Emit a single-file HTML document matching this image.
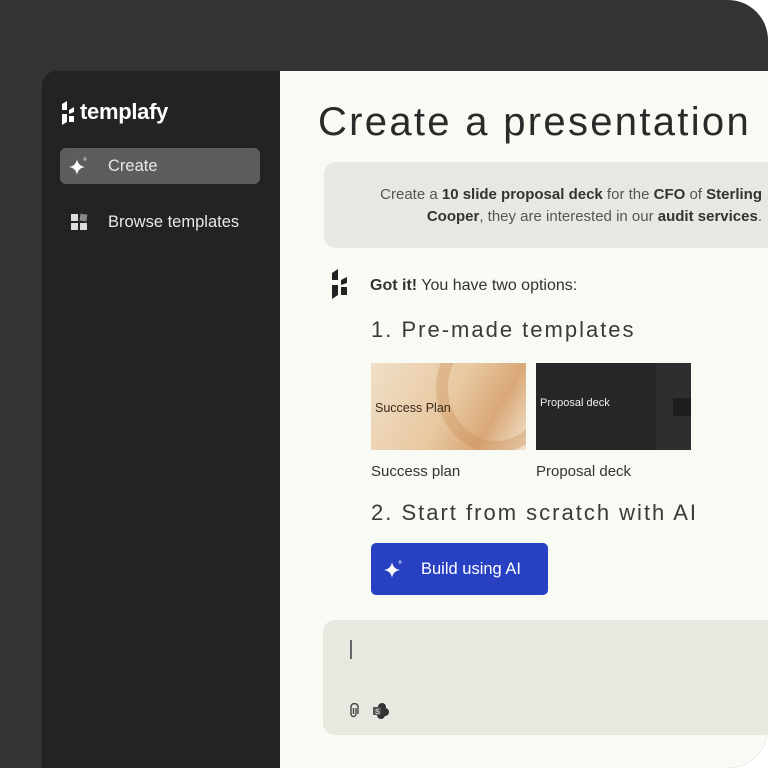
<!DOCTYPE html>
<html><head><style>
*{margin:0;padding:0;box-sizing:border-box}
html,body{width:768px;height:768px;background:#fff;overflow:hidden;font-family:"Liberation Sans",sans-serif}
.frame{position:absolute;left:0;top:0;width:768px;height:768px;background:#333333;border-radius:0 40px 40px 0;overflow:hidden}
.side{position:absolute;left:42px;top:71px;width:238px;height:700px;background:#232323;border-radius:14px 0 0 0}
.main{position:absolute;left:280px;top:71px;width:488px;height:700px;background:#f8faf4}
.abs{position:absolute}
.logo{left:60px;top:99px;color:#fff;font-size:22px;font-weight:bold;letter-spacing:-0.3px}
.nav{left:60px;top:148px;width:200px;height:36px;background:#5d5d5d;border-radius:6px}
.navt{color:#e8e8e8;font-size:16.5px}
h1{position:absolute;left:318px;top:100px;font-size:40px;font-weight:normal;color:#2a2a2a;letter-spacing:2.3px;white-space:nowrap}
.q{left:324px;top:162px;width:460px;height:86px;background:#e6e8e1;border-radius:12px}
.qt{position:absolute;right:22px;top:22px;text-align:right;font-size:15px;line-height:22px;color:#555;width:420px}
.qt b{color:#333}
.t16{font-size:15px;color:#333}
.h2{font-size:22px;color:#3a3a3a;letter-spacing:2px;white-space:nowrap}
.btn{left:371px;top:543px;width:177px;height:52px;background:#2841c2;border-radius:5px;color:#fff;font-size:16px}
.inp{left:323px;top:620px;width:470px;height:115px;background:#e7e9e1;border-radius:12px}
</style></head><body>
<div class="frame">
<div class="side"></div>
<div class="main"></div>
<svg class="abs" style="left:60px;top:100px" width="16" height="26" viewBox="0 0 16 26"><path d="M2 4 L7 1 L7 10 L2 10Z M9 10 L14 7 L14 12 L9 14Z M2 14 L7 14 L7 22 L2 25Z M9 16 L14 16 L14 22 L9 22Z" fill="#fff"/></svg>
<div class="abs logo" style="left:80px">templafy</div>
<div class="abs nav"></div>
<svg class="abs" style="left:68px;top:155px" width="22" height="22" viewBox="0 0 22 22"><path d="M9 4 Q10 11 17 12 Q10 13 9 20 Q8 13 1 12 Q8 11 9 4Z" fill="#fff"/><path d="M17 1 L18 3.5 L20 4 L18 4.5 L17 7 L16 4.5 L14 4 L16 3.5Z" fill="#aaa"/></svg>
<div class="abs navt" style="left:108px;top:157px">Create</div>
<svg class="abs" style="left:70px;top:213px" width="18" height="18" viewBox="0 0 18 18"><rect x="1" y="1" width="7" height="7" fill="#ddd"/><rect x="10" y="1" width="7" height="7" fill="#888" transform="rotate(8 13 4)"/><rect x="1" y="10" width="7" height="7" fill="#ddd"/><rect x="10" y="10" width="7" height="7" fill="#ddd"/></svg>
<div class="abs navt" style="left:108px;top:213px">Browse templates</div>
<h1>Create a presentation</h1>
<div class="abs q"><div class="qt">Create a <b>10 slide proposal deck</b> for the <b>CFO</b> of <b>Sterling Cooper</b>, they are interested in our <b>audit services</b>.</div></div>
<svg class="abs" style="left:330px;top:268px" width="20" height="32" viewBox="0 0 20 32"><path d="M2 5 L8 1 L8 12 L2 12Z M11 12 L17 9 L17 15 L11 17Z M2 17 L8 17 L8 27 L2 31Z M11 19 L17 19 L17 27 L11 27Z" fill="#222"/></svg>
<div class="abs t16" style="left:370px;top:277px;font-size:16px"><b>Got it!</b> You have two options:</div>
<div class="abs h2" style="left:371px;top:317px">1. Pre-made templates</div>
<div class="abs" style="left:371px;top:363px;width:155px;height:87px;background:linear-gradient(120deg,#f0dfc8 0%,#e8c8a0 50%,#d9a878 75%,#f3e3cc 100%);overflow:hidden">
<div style="position:absolute;right:-30px;top:-40px;width:120px;height:130px;border-radius:50%;border:12px solid rgba(200,140,90,.35)"></div>
<div style="position:absolute;left:4px;top:38px;font-size:12.5px;color:#3a2a1a">Success Plan</div></div>
<div class="abs" style="left:536px;top:363px;width:155px;height:87px;background:#262626;overflow:hidden">
<div style="position:absolute;right:0;top:0;width:35px;height:87px;background:#2e2e2e"></div>
<div style="position:absolute;right:0;top:35px;width:18px;height:18px;background:#1e1e1e"></div>
<div style="position:absolute;left:4px;top:34px;font-size:11px;color:#eee">Proposal deck</div></div>
<div class="abs t16" style="left:371px;top:463px">Success plan</div>
<div class="abs t16" style="left:536px;top:463px">Proposal deck</div>
<div class="abs h2" style="left:371px;top:500px">2. Start from scratch with AI</div>
<div class="abs btn"></div>
<svg class="abs" style="left:383px;top:558px" width="22" height="22" viewBox="0 0 22 22"><path d="M9 4 Q10 11 17 12 Q10 13 9 20 Q8 13 1 12 Q8 11 9 4Z" fill="#fff"/><path d="M17 1 L18 3.5 L20 4 L18 4.5 L17 7 L16 4.5 L14 4 L16 3.5Z" fill="#9aa8f0"/></svg>
<div class="abs" style="left:421px;top:560px;color:#fff;font-size:16.5px">Build using AI</div>
<div class="abs inp"></div>
<div class="abs" style="left:350px;top:640px;width:2px;height:19px;background:#666"></div>
<svg class="abs" style="left:347px;top:703px" width="14" height="16" viewBox="0 0 14 16"><path d="M9 5 V11 A2.5 2.5 0 0 1 4 11 V4 A3.5 3.5 0 0 1 11 4 V11" fill="none" stroke="#444" stroke-width="1.4"/><path d="M6.5 5 V11" stroke="#444" stroke-width="1.4"/></svg>
<svg class="abs" style="left:372px;top:702px" width="18" height="18" viewBox="0 0 18 18"><circle cx="10" cy="5" r="4" fill="#333"/><circle cx="13" cy="10" r="4" fill="#333"/><circle cx="9" cy="13" r="4" fill="#333"/><rect x="1" y="5" width="8" height="8" fill="#555"/><text x="3" y="12" font-size="7" fill="#fff" font-family="Liberation Sans">S</text></svg>
</div>
</body></html>
